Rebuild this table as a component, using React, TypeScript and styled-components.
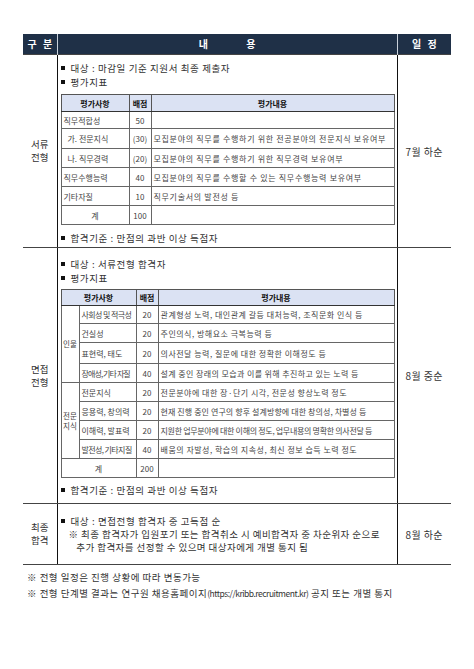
import React from 'react';
import styled, { createGlobalStyle } from 'styled-components';

const GlobalStyle = createGlobalStyle`
  html, body {
    margin: 0;
    padding: 0;
    background: #fff;
  }
  body {
    font-family: 'Noto Sans CJK KR', 'Noto Sans', sans-serif;
    color: #333;
  }
`;

const Page = styled.div`
  padding: 34px 0 0 23px;
  width: 428px;
`;

const Sheet = styled.table`
  width: 428px;
  border-collapse: collapse;
  table-layout: fixed;
  font-size: 9.5px;
`;

const HeadCell = styled.th<{ $gap: number }>`
  height: 20px;
  padding: 0;
  background: #1f3047;
  color: #fff;
  font-weight: 700;
  font-size: 10px;
  line-height: 20px;
  word-spacing: ${(p) => p.$gap}px;
  border-left: 1px solid #c9d0da;
  &:first-child {
    border-left: none;
  }
`;

const StageCell = styled.td`
  padding: 0;
  border-top: 1.5px solid #444;
  border-bottom: 1.5px solid #444;
  border-right: 1.5px solid #111;
  text-align: center;
  vertical-align: middle;
  font-size: 9.5px;
  line-height: 13px;
  color: #333;
`;

const ContentCell = styled.td<{ $height: number; $pad: string; $middle?: boolean }>`
  height: ${(p) => p.$height}px;
  padding: ${(p) => p.$pad};
  border-top: 1.5px solid #444;
  border-bottom: 1.5px solid #444;
  border-right: 1.5px solid #111;
  vertical-align: ${(p) => (p.$middle ? 'middle' : 'top')};
  box-sizing: border-box;
`;

const DateCell = styled.td`
  padding: 0;
  border-top: 1.5px solid #444;
  border-bottom: 1.5px solid #444;
  text-align: center;
  vertical-align: middle;
  font-size: 10px;
  letter-spacing: 0.4px;
  color: #333;
`;

const Line = styled.div<{ $lh?: number }>`
  display: flex;
  align-items: center;
  height: ${(p) => p.$lh ?? 14}px;
  padding-left: 2px;
  letter-spacing: 0.6px;
  white-space: nowrap;
  &::before {
    content: '';
    flex: none;
    width: 4px;
    height: 4px;
    background: #111;
    margin-right: 6px;
  }
`;

const Note = styled.div`
  padding-left: 20px;
  text-indent: -10px;
  line-height: 13px;
  letter-spacing: 0.45px;
  white-space: nowrap;
`;

const Gap = styled.div<{ $h: number }>`
  height: ${(p) => p.$h}px;
`;

const Score = styled.table`
  width: 334px;
  margin-left: 2px;
  border-collapse: collapse;
  table-layout: fixed;
  border: 1.5px solid #333;
  font-size: 8px;
  color: #444;
`;

const ScoreHead = styled.th`
  padding: 0;
  background: #dbe2f3;
  color: #111;
  font-weight: 700;
  font-size: 8px;
  border: 1px solid #555;
  border-bottom: 1.5px solid #333;
`;

const ScoreCell = styled.td<{ $align?: 'left' | 'center'; $indent?: number; $dashed?: boolean; $spacing?: number }>`
  padding: 0 0 0 ${(p) => p.$indent ?? 2}px;
  text-align: ${(p) => p.$align ?? 'left'};
  border: 1px solid #666;
  border-top-style: ${(p) => (p.$dashed ? 'dashed' : 'solid')};
  letter-spacing: ${(p) => p.$spacing ?? 0}px;
  white-space: nowrap;
  overflow: hidden;
`;

const GroupCell = styled.td`
  padding: 0;
  text-align: center;
  border: 1px solid #666;
  font-size: 7.5px;
  line-height: 10px;
`;

const Footer = styled.div`
  padding: 4px 0 0 4px;
  font-size: 9.5px;
  line-height: 16px;
  letter-spacing: 0.5px;
  color: #333;
  white-space: nowrap;
`;

const Url = styled.span`
  font-size: 8.5px;
  letter-spacing: -0.5px;
`;

type DocRow = { item: string; indent?: boolean; score: string; desc: string; dashed?: boolean; h: number; spacing?: number };

const documentRows: DocRow[] = [
  { item: '직무적합성', score: '50', desc: '', h: 17 },
  { item: '가. 전문지식', indent: true, score: '(30)', desc: '모집분야의 직무를 수행하기 위한 전공분야의 전문지식 보유여부', dashed: true, h: 20, spacing: 0.7 },
  { item: '나. 직무경력', indent: true, score: '(20)', desc: '모집분야의 직무를 수행하기 위한 직무경력 보유여부', dashed: true, h: 19, spacing: 0.7 },
  { item: '직무수행능력', score: '40', desc: '모집분야의 직무를 수행할 수 있는 직무수행능력 보유여부', h: 19, spacing: 0.7 },
  { item: '기타자질', score: '10', desc: '직무기술서의 발전성 등', h: 19, spacing: 0.7 },
];

type InterviewRow = { item: string; score: string; desc: string; h: number; spacing?: number; itemSpacing?: number };

const interviewGroups: { label: string[]; rows: InterviewRow[] }[] = [
  {
    label: ['인물'],
    rows: [
      { item: '사회성 및 적극성', score: '20', desc: '관계형성 노력, 대인관계 갈등 대처능력, 조직문화 인식 등', h: 18, spacing: 0.5, itemSpacing: -0.6 },
      { item: '건실성', score: '20', desc: '주인의식, 방해요소 극복능력 등', h: 19, spacing: 0.5 },
      { item: '표현력, 태도', score: '20', desc: '의사전달 능력, 질문에 대한 정확한 이해정도 등', h: 21, spacing: 0.5 },
      { item: '장애성, 기타 자질', score: '40', desc: '설계 중인 장래의 모습과 이를 위해 추진하고 있는 노력 등', h: 19, spacing: 0.4, itemSpacing: -0.9 },
    ],
  },
  {
    label: ['전문', '지식'],
    rows: [
      { item: '전문지식', score: '20', desc: '전문분야에 대한 장·단기 시각, 전문성 향상노력 정도', h: 19, spacing: 0.5 },
      { item: '응용력, 창의력', score: '20', desc: '현재 진행 중인 연구의 향후 설계방향에 대한 창의성, 차별성 등', h: 19, spacing: 0.1 },
      { item: '이해력, 발표력', score: '20', desc: '지원한 업무분야에 대한 이해의 정도, 업무내용의 명확한 의사전달 등', h: 19, spacing: -0.3 },
      { item: '발전성, 기타지질', score: '40', desc: '배움의 자발성, 학습의 지속성, 최신 정보 습득 노력 정도', h: 19, spacing: 0.5, itemSpacing: -0.6 },
    ],
  },
];

function DocumentTable() {
  return (
    <Score>
      <colgroup>
        <col style={{ width: 68 }} />
        <col style={{ width: 22 }} />
        <col />
      </colgroup>
      <thead>
        <tr style={{ height: 17 }}>
          <ScoreHead>평가사항</ScoreHead>
          <ScoreHead>배점</ScoreHead>
          <ScoreHead>평가내용</ScoreHead>
        </tr>
      </thead>
      <tbody>
        {documentRows.map((r) => (
          <tr key={r.item} style={{ height: r.h }}>
            <ScoreCell $indent={r.indent ? 6 : 2} $dashed={r.dashed}>{r.item}</ScoreCell>
            <ScoreCell $align="center" $indent={0} $dashed={r.dashed}>{r.score}</ScoreCell>
            <ScoreCell $dashed={r.dashed} $spacing={r.spacing}>{r.desc}</ScoreCell>
          </tr>
        ))}
        <tr style={{ height: 19 }}>
          <ScoreCell $align="center" $indent={0}>계</ScoreCell>
          <ScoreCell $align="center" $indent={0}>100</ScoreCell>
          <ScoreCell />
        </tr>
      </tbody>
    </Score>
  );
}

function InterviewTable() {
  return (
    <Score>
      <colgroup>
        <col style={{ width: 18 }} />
        <col style={{ width: 57 }} />
        <col style={{ width: 22 }} />
        <col />
      </colgroup>
      <thead>
        <tr style={{ height: 16 }}>
          <ScoreHead colSpan={2}>평가사항</ScoreHead>
          <ScoreHead>배점</ScoreHead>
          <ScoreHead>평가내용</ScoreHead>
        </tr>
      </thead>
      <tbody>
        {interviewGroups.map((g) =>
          g.rows.map((r, i) => (
            <tr key={r.item} style={{ height: r.h }}>
              {i === 0 && (
                <GroupCell rowSpan={g.rows.length}>
                  {g.label.map((l) => (
                    <div key={l}>{l}</div>
                  ))}
                </GroupCell>
              )}
              <ScoreCell $spacing={r.itemSpacing}>{r.item}</ScoreCell>
              <ScoreCell $align="center" $indent={0}>{r.score}</ScoreCell>
              <ScoreCell $spacing={r.spacing}>{r.desc}</ScoreCell>
            </tr>
          ))
        )}
        <tr style={{ height: 19 }}>
          <ScoreCell colSpan={2} $align="center" $indent={0}>계</ScoreCell>
          <ScoreCell $align="center" $indent={0}>200</ScoreCell>
          <ScoreCell />
        </tr>
      </tbody>
    </Score>
  );
}

export default function App() {
  return (
    <>
      <GlobalStyle />
      <Page>
        <Sheet>
          <colgroup>
            <col style={{ width: 34 }} />
            <col style={{ width: 340 }} />
            <col style={{ width: 54 }} />
          </colgroup>
          <thead>
            <tr>
              <HeadCell $gap={4}>구 분</HeadCell>
              <HeadCell $gap={36}>내 용</HeadCell>
              <HeadCell $gap={4}>일 정</HeadCell>
            </tr>
          </thead>
          <tbody>
            <tr>
              <StageCell>
                서류
                <br />
                전형
              </StageCell>
              <ContentCell $height={193} $pad="6px 1px 0 1px">
                <Line>대상 : 마감일 기준 지원서 최종 제출자</Line>
                <Line>평가지표</Line>
                <Gap $h={5} />
                <DocumentTable />
                <Gap $h={6} />
                <Line>합격기준 : 만점의 과반 이상 득점자</Line>
              </ContentCell>
              <DateCell>7월 하순</DateCell>
            </tr>
            <tr>
              <StageCell>
                면접
                <br />
                전형
              </StageCell>
              <ContentCell $height={256} $pad="9px 1px 0 1px">
                <Line>대상 : 서류전형 합격자</Line>
                <Line>평가지표</Line>
                <Gap $h={4} />
                <InterviewTable />
                <Gap $h={5} />
                <Line>합격기준 : 만점의 과반 이상 득점자</Line>
              </ContentCell>
              <DateCell>8월 중순</DateCell>
            </tr>
            <tr>
              <StageCell>
                최종
                <br />
                합격
              </StageCell>
              <ContentCell $height={61} $pad="0 1px" $middle>
                <Line $lh={13}>대상 : 면접전형 합격자 중 고득점 순</Line>
                <Note>※ 최종 합격자가 입원포기 또는 합격취소 시 예비합격자 중 차순위자 순으로</Note>
                <Note>&nbsp;&nbsp;&nbsp;추가 합격자를 선정할 수 있으며 대상자에게 개별 통지 됨</Note>
              </ContentCell>
              <DateCell>8월 하순</DateCell>
            </tr>
          </tbody>
        </Sheet>
        <Footer>
          <div>※ 전형 일정은 진행 상황에 따라 변동가능</div>
          <div>
            ※ 전형 단계별 결과는 연구원 채용홈페이지<Url>(https://kribb.recruitment.kr)</Url> 공지 또는 개별 통지
          </div>
        </Footer>
      </Page>
    </>
  );
}
